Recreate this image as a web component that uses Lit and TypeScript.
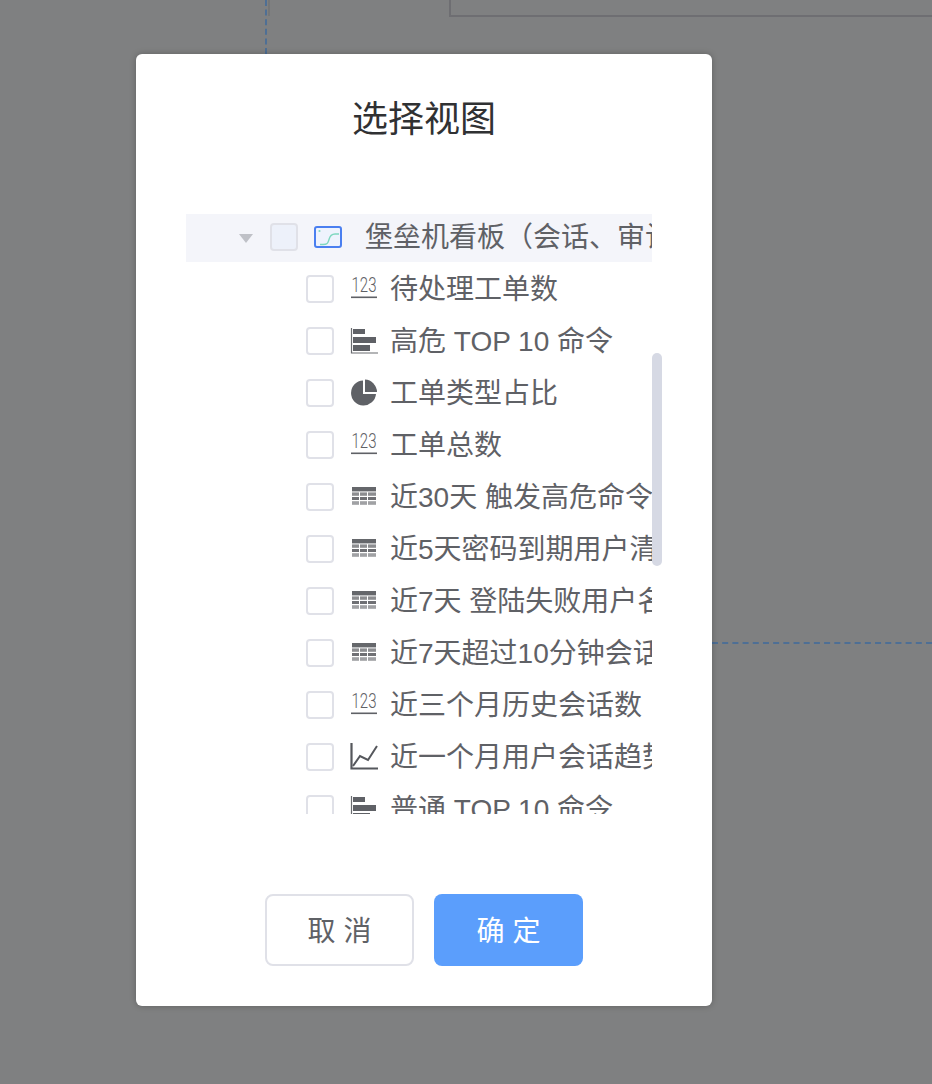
import { LitElement, html, css, svg } from "lit";
import { customElement } from "lit/decorators.js";

const ICONS: Record<string, unknown> = {
  num: svg`<svg class="ic" width="28" height="28" viewBox="0 0 28 28"><text class="n" x="1.5" y="17" textLength="25" lengthAdjust="spacingAndGlyphs">123</text><rect x="1" y="21.5" width="26" height="1.6" fill="#5f6166"/></svg>`,
  bar: svg`<svg class="ic" width="28" height="28" viewBox="0 0 28 28"><path d="M1.5 1v25H28" fill="none" stroke="#6a6c70" stroke-width="1.2"/><g fill="#5f6166"><rect x="3" y="2" width="12" height="5"/><rect x="3" y="10" width="23" height="6"/><rect x="3" y="18" width="17" height="6"/></g></svg>`,
  pie: svg`<svg class="ic" width="28" height="28" viewBox="0 0 28 28"><g fill="#5f6166"><path d="M13 1.5a12.5 12.5 0 1 0 13 13.5H13z"/><path d="M15 0.6a12.6 12.6 0 0 1 12 12.4H15z"/></g></svg>`,
  table: svg`<svg class="ic" width="28" height="28" viewBox="0 0 28 28"><rect x="2" y="4" width="24" height="4.4" fill="#65676b"/><g fill="#8c8d90"><rect x="2" y="9.4" width="7" height="3.4"/><rect x="10" y="9.4" width="7" height="3.4"/><rect x="18" y="9.4" width="8" height="3.4"/></g><g fill="#6f7074"><rect x="2" y="14" width="7" height="3"/><rect x="10" y="14" width="7" height="3"/><rect x="18" y="14" width="8" height="3"/></g><g fill="#a0a1a4"><rect x="2" y="18.2" width="7" height="3.6"/><rect x="10" y="18.2" width="7" height="3.6"/><rect x="18" y="18.2" width="8" height="3.6"/></g></svg>`,
  line: svg`<svg class="ic" width="28" height="28" viewBox="0 0 28 28"><path d="M1.5 -1v26.5H28" fill="none" stroke="#55575c" stroke-width="2.2"/><path d="M3 23l7-10 8 4 9-14" fill="none" stroke="#55575c" stroke-width="2"/></svg>`,
};

const ROWS: [string, string][] = [
  ["num", "待处理工单数"],
  ["bar", "高危 TOP 10 命令"],
  ["pie", "工单类型占比"],
  ["num", "工单总数"],
  ["table", "近30天 触发高危命令"],
  ["table", "近5天密码到期用户清单"],
  ["table", "近7天 登陆失败用户名单"],
  ["table", "近7天超过10分钟会话"],
  ["num", "近三个月历史会话数"],
  ["line", "近一个月用户会话趋势"],
  ["bar", "普通 TOP 10 命令"],
];

@customElement("app-root")
export class AppRoot extends LitElement {
  static styles = css`
    :host {
      display: block;
      font-family: "Liberation Sans", "Noto Sans CJK SC", sans-serif;
    }
    .backdrop {
      position: relative;
      height: 1084px;
      overflow: hidden;
      background: #7f8081;
      padding-top: 54px;
      box-sizing: border-box;
    }
    .deco { position: absolute; }
    .vdash {
      left: 265px; top: 0; height: 54px; width: 0;
      border-left: 2px dashed #4e6f95;
    }
    .hdash {
      left: 712px; right: 0; top: 642px; height: 0;
      border-top: 2px dashed #4e6f95;
    }
    .frame {
      left: 449px; top: -4px; width: 600px; height: 17px;
      border: 2px solid #6e6e72;
    }
    .vbar { left: 268px; top: 0; width: 2px; height: 16px; background: #757677; }
    .modal {
      position: relative;
      width: 576px;
      height: 952px;
      margin-left: 136px;
      box-sizing: border-box;
      padding: 36px 0 40px;
      background: #fff;
      border-radius: 6px;
      box-shadow: 0 0 6px rgba(0,0,0,.25);
      display: flex;
      flex-direction: column;
    }
    h1 {
      margin: 0;
      padding-top: 2px;
      height: 54px;
      line-height: 56px;
      text-align: center;
      font-size: 36px;
      font-weight: 400;
      color: #303133;
    }
    .wrap {
      position: relative;
      margin: 68px 60px 0 50px;
      height: 600px;
    }
    .list { height: 100%; overflow: hidden; }
    .scroll {
      position: absolute;
      left: 466px; top: 139px;
      width: 10px; height: 213px;
      border-radius: 5px;
      background: #d6d9e4;
    }
    .row {
      display: flex;
      align-items: center;
      height: 52px;
      padding-left: 120px;
      font-size: 28px;
      color: #5f6166;
      white-space: nowrap;
    }
    .row span { margin-top: -4px; }
    .parent {
      height: 48px;
      margin-bottom: 1px;
      padding-left: 53px;
      background: #f4f5fa;
    }
    .parent span { margin-top: -6px; }
    .tri {
      flex: none;
      width: 0; height: 0;
      border-left: 7px solid transparent;
      border-right: 7px solid transparent;
      border-top: 9px solid #bfc1c7;
      margin-right: 17px;
    }
    .box {
      flex: none;
      width: 28px; height: 28px;
      box-sizing: border-box;
      border: 2px solid #e0e1e8;
      border-radius: 4px;
      background: #fff;
      margin-right: 16px;
    }
    .parent .box { background: #edf1fa; margin-top: -2px; }
    .flag { flex: none; margin-right: 23px; margin-top: -2px; }
    .ic { flex: none; margin-right: 12px; }
    .n { font-family: Roboto, sans-serif; font-weight: 300; font-size: 21px; fill: #5f6166; }
    .foot {
      display: flex;
      justify-content: center;
      gap: 20px;
      margin-top: 80px;
    }
    button {
      width: 149px; height: 72px;
      box-sizing: border-box;
      border-radius: 8px;
      font: inherit;
      font-size: 28px;
      padding: 0 0 2px;
    }
    .cancel { background: #fff; border: 2px solid #e0e1e8; color: #5f6166; }
    .ok { background: #5b9efc; border: 0; color: #fff; }
  `;

  render() {
    return html`<div class="backdrop">
      <div class="deco vdash"></div>
      <div class="deco vbar"></div>
      <div class="deco frame"></div>
      <div class="deco hdash"></div>
      <div class="modal">
        <h1>选择视图</h1>
        <div class="wrap">
          <div class="list">
            <div class="row parent">
              <i class="tri"></i><i class="box"></i>
              <svg class="flag" width="28" height="22" viewBox="0 0 28 22"><rect x="1" y="1" width="26" height="20" rx="2" fill="#eef3fd" stroke="#4a7ff0" stroke-width="2"/><path d="M6 18.5h3c4 0 5-1 6-5 1-4 3-5.5 6-5.5h4" fill="none" stroke="#7fd8c0" stroke-width="1.4"/><circle cx="5.5" cy="5" r="1.1" fill="#7fd8c0"/></svg>
              <span>堡垒机看板（会话、审计）</span>
            </div>
            ${ROWS.map(
              ([ic, t]) => html`<div class="row"><i class="box"></i>${ICONS[ic]}<span>${t}</span></div>`
            )}
          </div>
          <div class="scroll"></div>
        </div>
        <div class="foot">
          <button class="cancel">取 消</button>
          <button class="ok">确 定</button>
        </div>
      </div>
    </div>`;
  }
}
